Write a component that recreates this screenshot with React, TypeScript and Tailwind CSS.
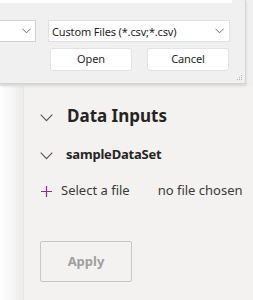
import React from "react";

const Chevron = ({ className = "" }: { className?: string }) => (
  <svg width="9" height="6" viewBox="0 0 9 6" className={className} fill="none">
    <path d="M0.5 0.8 L4.5 4.8 L8.5 0.8" stroke="#6b6b6b" strokeWidth="1" />
  </svg>
);

const BigChevron = () => (
  <svg width="13" height="8" viewBox="0 0 13 8" fill="none">
    <path d="M0.7 0.7 L6.5 6.6 L12.3 0.7" stroke="#555" strokeWidth="1.1" />
  </svg>
);

export default function App() {
  return (
    <div className="w-[253px] h-[300px] bg-[#f3f2f1] overflow-hidden flex flex-col" style={{ fontFamily: '"Noto Sans", "Open Sans", sans-serif' }}>
      {/* dialog */}
      <div className="flex h-[86px] shrink-0">
        <div className="w-[246px] h-[84px] bg-[#f0f0f0] border-r border-b border-[#d4d4d4] shadow-[0_2px_3px_rgba(0,0,0,0.12)] relative">
          <div className="h-[3px] w-[232px] bg-white" />
          <div className="flex mt-[17px] gap-[12px]">
            <div className="w-[36px] h-[22px] bg-white border border-[#d0d0d0] border-l-0 flex items-center justify-end pr-[4px]">
              <Chevron />
            </div>
            <div className="w-[182px] h-[22px] bg-white border border-[#e0e0e0] flex items-center justify-between pl-[3px] pr-[5px]">
              <span className="text-[11px] tracking-[-0.15px] text-[#1f1f1f] leading-none">Custom Files (*.csv;*.csv)</span>
              <Chevron />
            </div>
          </div>
          <div className="flex ml-[50px] mt-[6px] gap-[15px]">
            <div className="w-[82px] h-[23px] bg-white border border-[#e3e3e3] rounded-[3px] flex items-center justify-center text-[11px] tracking-[-0.1px] text-[#1f1f1f]">Open</div>
            <div className="w-[82px] h-[23px] bg-white border border-[#e3e3e3] rounded-[3px] flex items-center justify-center text-[11px] tracking-[-0.1px] text-[#1f1f1f]">Cancel</div>
          </div>
          <svg className="absolute right-[2px] bottom-[2px]" width="6" height="6" viewBox="0 0 6 6">
            <rect x="4" y="0" width="1" height="1" fill="#b5b5b5" />
            <rect x="2" y="2" width="1" height="1" fill="#b5b5b5" />
            <rect x="4" y="2" width="1" height="1" fill="#b5b5b5" />
            <rect x="0" y="4" width="1" height="1" fill="#b5b5b5" />
            <rect x="2" y="4" width="1" height="1" fill="#b5b5b5" />
            <rect x="4" y="4" width="1" height="1" fill="#b5b5b5" />
          </svg>
        </div>
        <div className="flex-1 bg-[#f0f0f0]" />
      </div>
      {/* page */}
      <div className="flex flex-1">
        <div className="w-[24px] bg-gradient-to-r from-white to-[#ececec] border-r border-[#e6e6e6]" />
        <div className="flex-1 flex flex-col pl-[16px]">
          <div className="flex items-center mt-[17px] h-[24px]">
            <div className="w-[27px] pt-[6px]"><BigChevron /></div>
            <span className="text-[17px] font-bold text-[#252423] leading-none">Data Inputs</span>
          </div>
          <div className="flex items-center mt-[17px] h-[20px]">
            <div className="w-[26px] pt-[4px]"><BigChevron /></div>
            <span className="text-[13px] font-bold tracking-[-0.2px] text-[#252423] leading-none">sampleDataSet</span>
          </div>
          <div className="flex items-center mt-[17px] h-[20px] text-[13px] text-[#3b3a39]">
            <svg width="11" height="11" viewBox="0 0 11 11" className="ml-[1px] mr-[9px]">
              <path d="M5.5 0 V11 M0 5.5 H11" stroke="#8a2f8e" strokeWidth="1.2" />
            </svg>
            <span>Select a file</span>
            <span className="ml-[28px]">no file chosen</span>
          </div>
          <div className="mt-[40px] w-[92px] h-[41px] border border-[#c8c6c4] rounded-[2px] flex items-center justify-center text-[13px] font-bold text-[#a19f9d]">Apply</div>
        </div>
      </div>
    </div>
  );
}
